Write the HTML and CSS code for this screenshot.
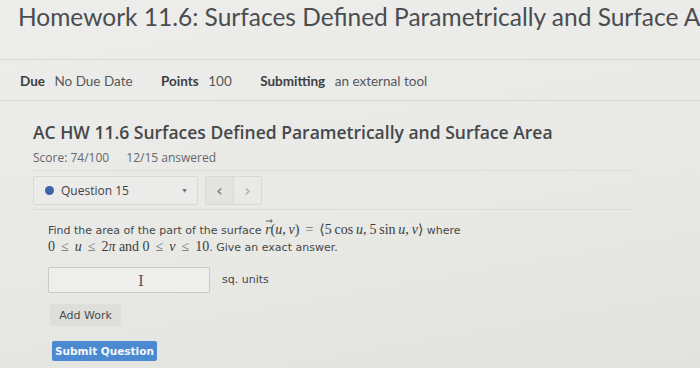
FILE: index.html
```html
<!DOCTYPE html>
<html>
<head>
  <link rel="stylesheet" href="styles.css">
</head>
<body>
  <div class="page">
    <h1 class="title">Homework 11.6: Surfaces Defined Parametrically and Surface Area</h1>
    <div class="meta">
      <span class="meta-item"><b>Due</b> No Due Date</span>
      <span class="meta-item"><b>Points</b> 100</span>
      <span class="meta-item"><b>Submitting</b> an external tool</span>
    </div>

    <div class="tool">
      <h2 class="hw-name">AC HW 11.6 Surfaces Defined Parametrically and Surface Area</h2>
      <div class="score">Score: 74/100 <span class="answered">12/15 answered</span></div>
      <div class="qnav">
        <div class="qselect">
          <span class="dot"></span>
          <span class="qlabel">Question 15</span>
          <span class="caret">&#9660;</span>
        </div>
        <div class="arrows">
          <span class="arrow prev">&lsaquo;</span>
          <span class="arrow next">&rsaquo;</span>
        </div>
      </div>

      <div class="question">
        <p class="prompt">Find the area of the part of the surface <span class="m"><span class="vec"><i>r</i><svg class="vec-arrow" width="7" height="4" viewBox="0 0 7 4"><path d="M0 2H6M4.5 0.5L6.3 2L4.5 3.5" fill="none" stroke="#3a3d40" stroke-width="0.8"/></svg></span>(<i>u</i>,&thinsp;<i>v</i>)<span class="op">=</span>&#10216;5&thinsp;cos&thinsp;<i>u</i>,&thinsp;5&thinsp;sin&thinsp;<i>u</i>,&thinsp;<i>v</i>&#10217;</span> where<br>
          <span class="m">0<span class="op">&le;</span><i>u</i><span class="op">&le;</span>2<i>&pi;</i> and 0<span class="op">&le;</span><i>v</i><span class="op">&le;</span>10</span>. Give an exact answer.</p>
        <div class="answer">
          <div class="input"><span class="cursor">I</span></div>
          <span class="units">sq. units</span>
        </div>
        <button class="btn add">Add Work</button>
        <button class="btn submit">Submit Question</button>
      </div>
    </div>
  </div>
</body>
</html>
```

FILE: styles.css
```css
body {
  margin: 0;
  background: #e9e9e7;
  color: #3f4346;
  overflow: hidden;
}
.page {
  width: 700px;
  height: 368px;
  background: linear-gradient(170deg, #ededeb 0%, #e8e8e5 60%, #e2e2df 100%);
  overflow: hidden;
}
.title {
  font-family: Lato, sans-serif;
  font-weight: 400;
  font-size: 24.5px;
  margin: 0;
  padding: 0 0 0 18px;
  white-space: nowrap;
  color: #4a4d50;
  height: 59px;
  line-height: 34px;
  border-bottom: 1px solid #d8d8d5;
}
.meta {
  font-family: Lato, sans-serif;
  font-size: 13.5px;
  color: #55585a;
  padding: 13px 0 0 20px;
  height: 27px;
  border-bottom: 1px solid #d6d6d3;
}
.meta-item {
  margin-right: 25px;
}
.meta-item b {
  font-weight: 700;
  color: #3d4042;
  margin-right: 6px;
}
.tool {
  font-family: "DejaVu Sans", Verdana, sans-serif;
  padding: 19px 0 0 33px;
}
.hw-name {
  margin: 0;
  font-family: "Open Sans", sans-serif;
  font-size: 17.5px;
  line-height: 24px;
  font-weight: 600;
  color: #45484a;
  white-space: nowrap;
}
.score {
  font-family: "Open Sans", sans-serif;
  font-size: 12px;
  color: #65686a;
  margin-top: 5px;
  padding-bottom: 4px;
  border-bottom: 1px solid #dcdcd9;
  width: 600px;
}
.answered {
  margin-left: 14px;
}
.qnav {
  display: flex;
  gap: 7px;
  padding: 5px 0 4px;
  border-bottom: 1px solid #dadad7;
  width: 600px;
}
.qselect {
  width: 165px;
  height: 29px;
  border: 1px solid #d8d8d5;
  border-radius: 2px;
  background: #ebebe9;
  display: flex;
  align-items: center;
  font-family: "Open Sans", sans-serif;
  font-size: 12px;
  color: #3f4244;
  box-sizing: border-box;
  padding-left: 11px;
}
.dot {
  width: 9px;
  height: 9px;
  border-radius: 50%;
  background: #3d63a8;
  margin-right: 7px;
}
.qlabel {
  flex: 1;
}
.caret {
  font-size: 7px;
  color: #707375;
  margin-right: 9px;
}
.arrows {
  display: flex;
  height: 29px;
  border: 1px solid #d8d8d5;
  border-radius: 2px;
  box-sizing: border-box;
}
.arrow {
  width: 27px;
  display: flex;
  align-items: center;
  justify-content: center;
  font-size: 16px;
  color: #8a8d8f;
}
.arrow.prev {
  background: #e3e3e0;
  border-right: 1px solid #d8d8d5;
  color: #6a6d6f;
}
.arrow.next {
  color: #a5a8aa;
}
.question {
  padding: 12px 0 0 15px;
}
.prompt {
  margin: 0;
  font-size: 11px;
  line-height: 16px;
  color: #45484a;
}
.m {
  font-family: "Liberation Serif", "DejaVu Serif", serif;
  font-size: 14px;
  color: #3a3d40;
}
.op {
  color: #6a6d70;
  margin: 0 6px;
}
.vec {
  position: relative;
}
.vec-arrow {
  position: absolute;
  left: 1px;
  top: -3px;
}
.answer {
  display: flex;
  align-items: flex-start;
  margin-top: 11px;
}
.input {
  width: 162px;
  height: 26px;
  border: 1px solid #c9c9c6;
  border-radius: 2px;
  background: #eeeeec;
  box-sizing: border-box;
  position: relative;
}
.cursor {
  position: absolute;
  left: 89px;
  top: 5px;
  font-family: "DejaVu Serif", serif;
  font-size: 15px;
  color: #555;
  line-height: 16px;
}
.units {
  font-size: 11px;
  color: #45484a;
  margin: 6px 0 0 12px;
}
.btn {
  display: block;
  font-family: "DejaVu Sans", Verdana, sans-serif;
  font-size: 11px;
  border: none;
  border-radius: 2px;
  white-space: nowrap;
  padding: 0;
}
.add {
  margin: 11px 0 0 2px;
  width: 71px;
  height: 22px;
  background: #dededb;
  color: #4a4d50;
}
.submit {
  margin: 15px 0 0 4px;
  width: 105px;
  height: 20px;
  background: #4b8ad0;
  color: #f4f6fa;
  font-weight: 700;
  font-size: 10.5px;
}
```
